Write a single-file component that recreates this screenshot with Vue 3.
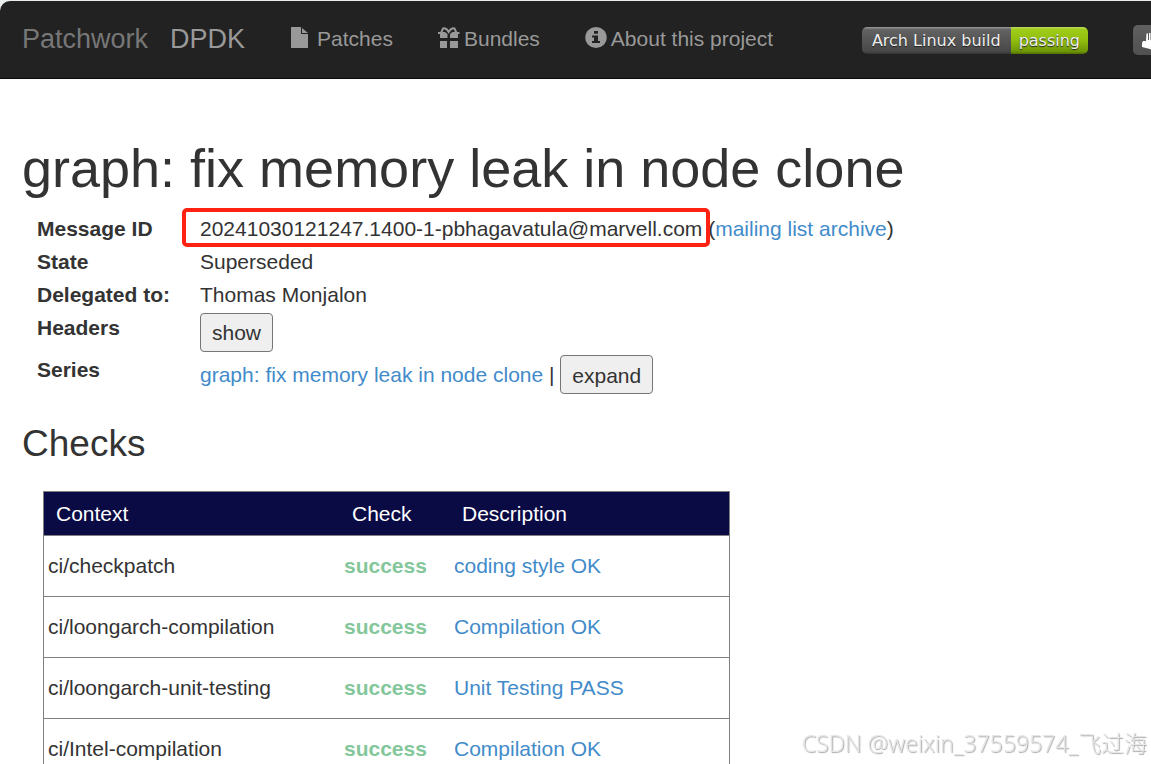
<script setup>
const checks = [
  { context: 'ci/checkpatch', state: 'success', description: 'coding style OK' },
  { context: 'ci/loongarch-compilation', state: 'success', description: 'Compilation OK' },
  { context: 'ci/loongarch-unit-testing', state: 'success', description: 'Unit Testing PASS' },
  { context: 'ci/Intel-compilation', state: 'success', description: 'Compilation OK' },
]
</script>

<template>
  <div class="page">
    <header class="frame">
      <nav class="navbar">
        <div class="brand">
          <a class="brand-main" href="#">Patchwork</a>
          <a class="brand-project" href="#">DPDK</a>
        </div>
        <ul class="links">
          <li>
            <a class="link file" href="#">
              <svg width="17" height="21" viewBox="0 0 17 21" aria-hidden="true">
                <path fill="currentColor" d="M0 0H10V7H17V21H0ZM11 1L17 6H11Z" />
              </svg>
              <span>Patches</span>
            </a>
          </li>
          <li>
            <a class="link" href="#">
              <svg width="22" height="21" viewBox="0 0 22 21" aria-hidden="true">
                <path fill="none" stroke="currentColor" stroke-width="2" d="M3 6L5 1.500Q8 0.500 10.700 5Q13.500 0.500 16.500 1.500L18.500 6" />
                <path fill="currentColor" d="M0 5H7L9.500 7V11H2V7H0ZM21.500 5H14.500L12 7V11H20V7H21.500ZM2 14H9V21H2ZM12 14H20V21H12Z" />
              </svg>
              <span>Bundles</span>
            </a>
          </li>
          <li>
            <a class="link" href="#">
              <svg width="22" height="21" viewBox="0 0 22 21" aria-hidden="true">
                <ellipse cx="11" cy="10.500" rx="10.700" ry="10.500" fill="currentColor" />
                <path fill="#222" d="M9 4H13V6.800H9ZM7 8.500H13V14H15V16H7V14H9V10.500H7Z" />
              </svg>
              <span>About this project</span>
            </a>
          </li>
        </ul>
        <div class="tools">
          <a class="badge" href="#"><span class="badge-label">Arch Linux build</span><span class="badge-value">passing</span></a>
          <button class="clap" type="button" aria-label="Applaud">
            <svg width="24" height="20" viewBox="0 0 24 20" aria-hidden="true">
              <path fill="#fff" d="M0 10L1 8H4L4.500 0.500H6V7H7V0H8.500V7H9V0H20V20H13L8 16L0 14Z" />
            </svg>
          </button>
        </div>
      </nav>
    </header>

    <main class="content">
      <h1>graph: fix memory leak in node clone</h1>
      <table class="meta">
        <tbody>
          <tr>
            <th scope="row">Message ID</th>
            <td><span class="marked">20241030121247.1400-1-pbhagavatula@marvell.com</span> (<a href="#">mailing list archive</a>)</td>
          </tr>
          <tr>
            <th scope="row">State</th>
            <td>Superseded</td>
          </tr>
          <tr>
            <th scope="row">Delegated to:</th>
            <td>Thomas Monjalon</td>
          </tr>
          <tr>
            <th scope="row">Headers</th>
            <td><button class="toggle" type="button">show</button></td>
          </tr>
          <tr>
            <th scope="row">Series</th>
            <td><a href="#">graph: fix memory leak in node clone</a> | <button class="toggle" type="button">expand</button></td>
          </tr>
        </tbody>
      </table>

      <h2>Checks</h2>
      <table class="checks">
        <thead>
          <tr>
            <th class="col-context" scope="col">Context</th>
            <th class="col-check" scope="col">Check</th>
            <th scope="col">Description</th>
          </tr>
        </thead>
        <tbody>
          <tr v-for="check in checks" :key="check.context">
            <td>{{ check.context }}</td>
            <td><b class="success">{{ check.state }}</b></td>
            <td><a href="#">{{ check.description }}</a></td>
          </tr>
        </tbody>
      </table>
    </main>
    <div class="watermark">CSDN @weixin_37559574_飞过海</div>
  </div>
</template>

<style>
body {
  margin: 0;
  overflow: hidden;
  background: #fff;
}
</style>

<style scoped>
.page {
  font-family: "Liberation Sans", Arial, sans-serif;
  font-size: 21px;
  line-height: 30px;
  color: #333;
}
a {
  color: #428bca;
  text-decoration: none;
}
.frame {
  padding-top: 1px;
  background: #e9eeec;
}
.navbar {
  display: flex;
  align-items: flex-start;
  padding: 23px 0 23px 22px;
  overflow: hidden;
  background: #222;
  border-bottom: 1px solid #080808;
  border-top-left-radius: 10px;
  white-space: nowrap;
}
.brand {
  display: flex;
  gap: 22px;
  font-size: 27px;
}
.brand-main {
  color: #777;
}
.brand-project,
.link {
  color: #999;
}
.links {
  display: flex;
  gap: 45px;
  margin: 0 0 0 46px;
  padding: 0;
  list-style: none;
}
.link {
  display: flex;
  align-items: center;
  gap: 4px;
}
.link.file {
  gap: 9px;
}
.link svg {
  margin-bottom: 4px;
}
.tools {
  display: flex;
  align-items: center;
  gap: 45px;
  margin: 1px 0 0 auto;
}
.badge {
  display: flex;
  overflow: hidden;
  border-radius: 5px;
  font-family: "DejaVu Sans", Verdana, sans-serif;
  font-size: 16px;
  line-height: 27px;
  color: #eee;
  text-shadow: 0 1px 1px #222;
}
.badge-label {
  padding: 0 10px;
  background: linear-gradient(#999, #626262 10%, #555 50%, #484848 90%, #333);
}
.badge-value {
  padding: 0 8px;
  background: linear-gradient(#bcd85f, #9fcb19 10%, #91bd0e 50%, #6f9607 90%, #506d00);
}
.badge span {
  padding-top: 1px;
  line-height: 26px;
}
.clap {
  width: 18px;
  height: 30px;
  padding: 5px 0 0 9px;
  overflow: hidden;
  border: 0;
  border-radius: 5px 0 0 5px;
  background: linear-gradient(#606060, #505050);
}
.clap svg {
  display: block;
}
.content {
  padding: 59px 22px 0;
}
h1,
h2 {
  margin: 0;
  font-weight: 400;
}
h1 {
  font-size: 54px;
  line-height: 60px;
}
h2 {
  margin-top: 27px;
  font-size: 37px;
  line-height: 42px;
}
table {
  border-collapse: collapse;
}
.meta {
  margin: 15px 0 0 15px;
}
.meta th,
.meta td {
  padding: 1px 0 2px;
  text-align: left;
  vertical-align: top;
}
.meta th {
  width: 163px;
}
.marked {
  position: relative;
}
.marked::after {
  content: "";
  position: absolute;
  inset: -9px -8px -7px -18px;
  border: 4px solid #ff2212;
  border-radius: 5px;
}
.toggle {
  box-sizing: border-box;
  height: 39px;
  padding: 0 11px;
  border: 1px solid #767676;
  border-radius: 4px;
  background: #efefef;
  font: inherit;
  color: #333;
  vertical-align: top;
}
.meta td:has(a + .toggle) {
  line-height: 39px;
}
.checks {
  width: 100%;
  max-width: 687px;
  margin: 26px 0 0 21px;
  border: 1px solid #808080;
}
.checks th {
  padding: 7px 12px 6px;
  border-bottom: 1px solid #808080;
  background: #0a0a44;
  color: #fff;
  font-weight: 400;
  text-align: left;
}
.col-context {
  width: 272px;
}
.col-check {
  width: 86px;
}
.checks td {
  padding: 15px 4px;
  border-bottom: 1px solid #808080;
}
.success {
  color: #84c79b;
}
.watermark {
  position: fixed;
  right: 4px;
  bottom: 6px;
  font-family: "Noto Sans", "Noto Sans CJK SC", sans-serif;
  font-size: 23px;
  font-weight: 300;
  color: #e6e6e6;
  text-shadow: 1px 1px 1px #aaa;
}
</style>
